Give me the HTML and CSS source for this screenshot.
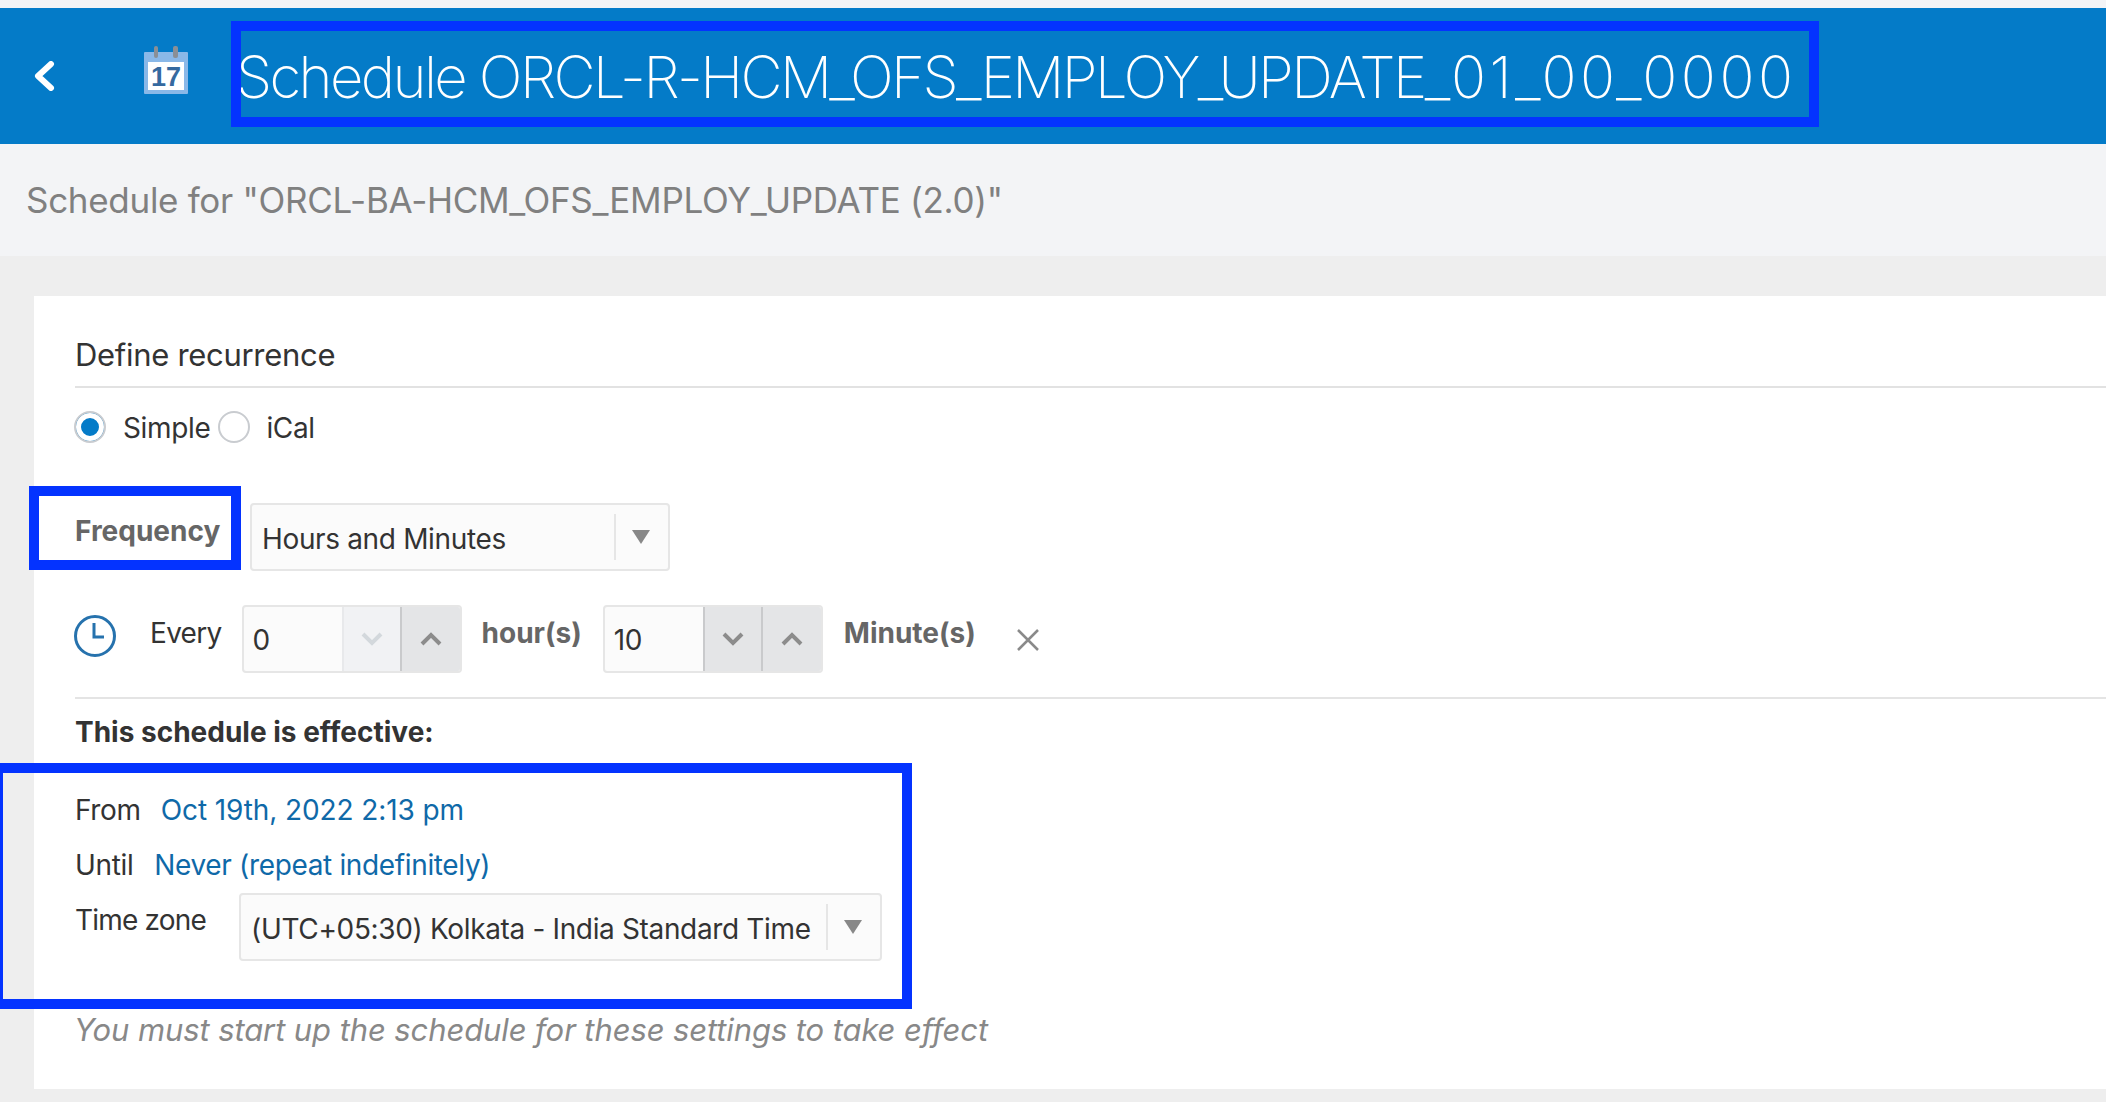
FILE: index.html
```html
<!DOCTYPE html>
<html lang="en">
<head>
<meta charset="utf-8">
<title>Schedule</title>
<link rel="stylesheet" href="styles.css">
</head>
<body>
<header class="page-head">
  <div class="appbar">
    <svg class="back" width="22" height="30" viewBox="0 0 22 30"><path d="M18 3 5 15l13 12" fill="none" stroke="#fff" stroke-width="6" stroke-linecap="round" stroke-linejoin="round"/></svg>
    <svg class="cal" width="44" height="48" viewBox="0 0 44 48">
      <rect x="0" y="6" width="44" height="42" rx="1" fill="#8ab8e8"/>
      <rect x="4" y="16" width="36" height="28" fill="#fff"/>
      <rect x="10" y="0" width="4" height="12" rx="2" fill="#8a8f96"/>
      <rect x="29" y="0" width="5" height="12" rx="2" fill="#8a8f96"/>
      <text class="cal-num" x="22" y="40" text-anchor="middle">17</text>
    </svg>
    <h1 class="title">Schedule ORCL-R-HCM_OFS_EMPLOY_UPDATE<span class="title-version">_01_00_0000</span></h1>
  </div>
  <div class="subhead">Schedule for "ORCL-BA-HCM_OFS_EMPLOY_UPDATE (2.0)"</div>
</header>
<main class="main">
  <section class="card">
    <h2 class="section-title">Define recurrence</h2>
    <div class="radio-row">
      <span class="radio radio-on"></span><span class="radio-label">Simple</span>
      <span class="radio radio-second"></span><span class="radio-label radio-label-second">iCal</span>
    </div>
    <div class="freq-row">
      <div class="freq-label">Frequency</div>
      <div class="select select-freq">
        <span class="select-text">Hours and Minutes</span>
        <span class="select-arrow"></span>
      </div>
    </div>
    <div class="every-row">
      <svg class="clock" width="42" height="42" viewBox="0 0 42 42"><circle cx="21" cy="21" r="19.5" fill="none" stroke="#2672ad" stroke-width="3"/><path d="M20 8v14h10" fill="none" stroke="#2672ad" stroke-width="3"/></svg>
      <span class="text every">Every</span>
      <div class="spinner">
        <span class="spin-value">0</span>
        <span class="spin-btn spin-off"><svg width="22" height="14" viewBox="0 0 22 14"><path d="M2 2l9 9 9-9" fill="none" stroke="#d3d8dc" stroke-width="4"/></svg></span>
        <span class="spin-btn"><svg width="22" height="14" viewBox="0 0 22 14"><path d="M2 12l9-9 9 9" fill="none" stroke="#8c8c8c" stroke-width="4"/></svg></span>
      </div>
      <span class="text strong unit">hour(s)</span>
      <div class="spinner spinner-min">
        <span class="spin-value">10</span>
        <span class="spin-btn"><svg width="22" height="14" viewBox="0 0 22 14"><path d="M2 2l9 9 9-9" fill="none" stroke="#8c8c8c" stroke-width="4"/></svg></span>
        <span class="spin-btn"><svg width="22" height="14" viewBox="0 0 22 14"><path d="M2 12l9-9 9 9" fill="none" stroke="#8c8c8c" stroke-width="4"/></svg></span>
      </div>
      <span class="text strong unit-min">Minute(s)</span>
      <svg class="close" width="24" height="24" viewBox="0 0 24 24"><path d="M2 2l20 20M22 2 2 22" fill="none" stroke="#8a8a8a" stroke-width="2.5"/></svg>
    </div>
    <hr class="rule">
    <div class="effective">This schedule is effective:</div>
    <div class="effect-box">
      <div class="date-row"><span class="text">From</span><a class="link link-from">Oct 19th, 2022 2:13 pm</a></div>
      <div class="date-row date-row-until"><span class="text">Until</span><a class="link link-until">Never (repeat indefinitely)</a></div>
      <div class="tz-row">
        <span class="text tz-label">Time zone</span>
        <div class="select select-tz">
          <span class="select-text">(UTC+05:30) Kolkata - India Standard Time</span>
          <span class="select-arrow"></span>
        </div>
      </div>
    </div>
    <p class="note">You must start up the schedule for these settings to take effect</p>
  </section>
</main>
</body>
</html>
```

FILE: styles.css
```css
* { box-sizing: border-box; }
html, body { margin: 0; height: 1102px; overflow: hidden; }
body { background: #eeeeee; font-family: Inter, "Noto Sans", sans-serif; font-size: 28px; letter-spacing: -0.35px; color: #333; line-height: 40px; }

.page-head { background: #f3f4f6; padding-top: 8px; }
.appbar { height: 136px; background: #047bc8; display: flex; align-items: center; }
.back { margin-left: 33px; }
.cal { margin-left: 89px; margin-top: -12px; }
.cal-num { font-family: "Liberation Sans", sans-serif; font-weight: 700; font-size: 27px; letter-spacing: 0; fill: #35699f; }
.title { margin: 0 0 4px 43px; width: 1588px; height: 106px; border: 10px solid #0433ff; padding-top: 5px; color: #fff; font-weight: 200; font-size: 58px; letter-spacing: -2.6px; line-height: 82px; text-indent: -5px; white-space: nowrap; overflow: hidden; }
.title-version { letter-spacing: 3.5px; }
.subhead { height: 112px; display: flex; align-items: center; padding-left: 26px; font-size: 35px; letter-spacing: -0.3px; color: #808080; white-space: nowrap; }

.main { padding: 40px 0 13px 34px; }
.card { background: #fff; height: 793px; padding-left: 41px; }
.section-title { margin: 0; height: 92px; padding-top: 39px; border-bottom: 2px solid #e2e2e2; font-size: 31px; letter-spacing: -0.3px; font-weight: 400; color: #333; line-height: 40px; }

.radio-row { display: flex; align-items: center; height: 32px; margin: 23px 0 0 -1px; }
.radio { width: 32px; height: 32px; border-radius: 50%; border: 2px solid #c9ccd0; background: #fff; flex: none; }
.radio-on { background: #047bc8; box-shadow: inset 0 0 0 5px #fff; }
.radio-second { margin-left: 8px; }
.radio-label { margin-left: 17px; padding-top: 2px; }
.radio-label-second { margin-left: 16px; }

.freq-row { display: flex; align-items: flex-start; margin-top: 43px; }
.freq-label { width: 212px; height: 84px; margin-left: -46px; border: 10px solid #0433ff; padding: 6px 0 0 36px; display: flex; align-items: center; font-weight: 700; letter-spacing: 0; color: #666; background: #fff; }
.select { display: flex; align-items: center; height: 68px; background: #fbfbfb; border: 2px solid #e6e6e6; border-radius: 4px; }
.select-freq { width: 420px; margin: 17px 0 0 9px; padding-left: 10px; }
.select-tz { width: 643px; margin-left: 33px; padding-left: 10px; }
.select-text { flex: 1; padding-top: 3px; color: #333; white-space: nowrap; }
.select-arrow { width: 54px; height: 46px; padding-right: 2px; border-left: 2px solid #e6e6e6; flex: none; display: flex; align-items: center; justify-content: center; }
.select-arrow::after { content: ""; border-style: solid; border-width: 14px 9px 0; border-color: #888 transparent transparent; }

.every-row { display: flex; align-items: flex-start; margin-top: 34px; height: 68px; }
.clock { margin: 10px 0 0 -1px; flex: none; }
.text { white-space: nowrap; }
.every-row .text { margin-top: 8px; }
.every { margin-left: 34px; letter-spacing: -0.7px; }
.strong { font-weight: 700; letter-spacing: 0; color: #666; }
.spinner { display: flex; width: 220px; height: 68px; margin-left: 20px; border: 2px solid #e6e6e6; border-radius: 4px; background: #fbfbfb; overflow: hidden; }
.spin-value { flex: 1; padding: 13px 0 0 9px; }
.spin-btn { width: 58px; flex: none; display: flex; align-items: center; justify-content: center; background: #e4e5e7; border-left: 2px solid #c9cacc; }
.spin-off { background: #f1f2f4; border-left-color: #e8e9eb; }
.spinner .spin-btn:last-child { width: 60px; }
.unit { margin-left: 20px; }
.spinner-min { margin-left: 21px; }
.unit-min { margin-left: 21px; }
.close { margin: 23px 0 0 40px; flex: none; }

.rule { margin: 24px 0 0; height: 2px; border: 0; background: #e4e4e4; }
.effective { margin-top: 13px; font-weight: 700; letter-spacing: 0; color: #333; }

.effect-box { width: 919px; height: 246px; margin: 11px 0 0 -82px; padding: 17px 0 0 72px; border: 10px solid #0433ff; }
.date-row { display: flex; height: 40px; }
.date-row-until { margin-top: 15px; }
.link { color: #0f69a8; white-space: nowrap; }
.link-from { margin-left: 20px; letter-spacing: -0.1px; }
.link-until { margin-left: 21px; }
.tz-row { display: flex; align-items: flex-start; margin-top: 8px; }
.tz-label { margin-top: 7px; letter-spacing: -0.8px; }

.note { margin: 1px 0 0 -1px; font-size: 31px; letter-spacing: -0.1px; font-style: italic; color: #888; white-space: nowrap; }
```
